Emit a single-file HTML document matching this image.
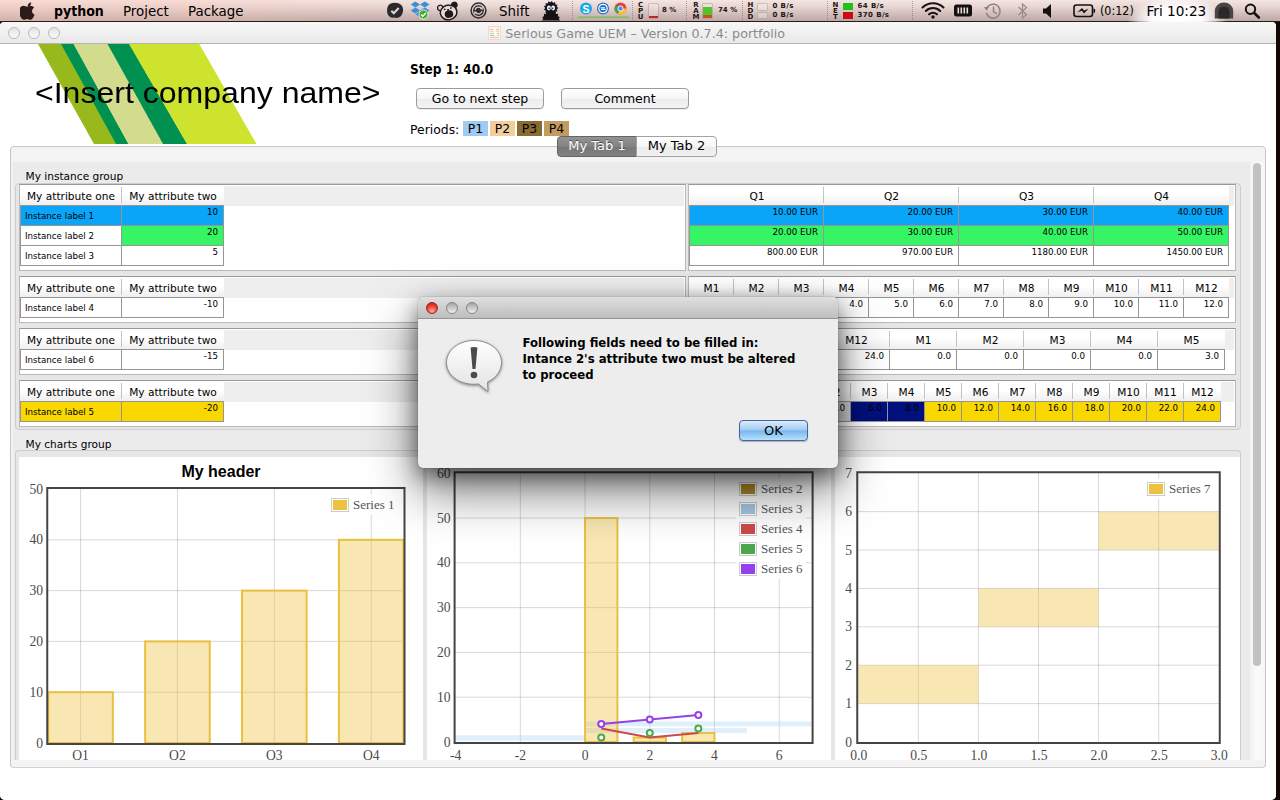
<!DOCTYPE html>
<html><head><meta charset="utf-8"><title>Serious Game UEM</title>
<style>
html,body{margin:0;padding:0}
body{width:1280px;height:800px;position:relative;overflow:hidden;background:#110705;font-family:'DejaVu Sans','Liberation Sans',sans-serif;font-size:12.5px;color:#000}
div,span{box-sizing:border-box}
.abs{position:absolute}
.t{position:absolute;white-space:nowrap;line-height:1}
#menubar{position:absolute;left:0;top:0;width:1280px;height:22px;background:linear-gradient(#f3e6e3 0%,#e6d3cf 35%,#cfbcb9 70%,#bba9a7 100%);border-bottom:1px solid #2e1712}
#win{position:absolute;left:0;top:22px;width:1276px;height:778px;background:#fff;border-radius:4px 4px 5px 5px;overflow:hidden}
#titlebar{position:absolute;left:0;top:0;width:100%;height:22px;background:linear-gradient(#f7f7f7,#e9e9e9);border-bottom:1px solid #b4b4b4;border-radius:4px 4px 0 0}
.tl{position:absolute;width:12px;height:12px;border-radius:6px;border:1px solid #b9b9b9;background:linear-gradient(#e4e4e4,#fafafa)}
.btn{position:absolute;height:21px;border:1px solid #9c9c9c;border-radius:4px;background:linear-gradient(#ffffff 0%,#f6f6f6 50%,#ececec 51%,#f3f3f3 100%);box-shadow:0 1px 0 rgba(0,0,0,0.08);text-align:center;font-size:12.5px;line-height:19px}
.per{position:absolute;top:121px;width:25px;height:15px;font-size:12.5px;line-height:15px;text-align:center}
.grp{position:absolute;border:1px solid #cdcdcd;border-radius:4px;background:#e6e6e6}
.frame{position:absolute;border:1px solid #b9b9b9;border-top-color:#989898;background:#fff}
.hband{position:absolute;left:1px;top:1px;right:1px;height:20px;background:#eeeeee}
.hc{position:absolute;top:0;height:20px;background:linear-gradient(#ffffff 0%,#ffffff 45%,#efefef 100%);font-size:10.6px;line-height:22px;text-align:center;overflow:hidden}
.hc i{position:absolute;right:0;top:2px;width:1px;height:16px;background:#c3c3c3}
.cell{position:absolute;height:21px;border:1px solid #959595;font-size:8.7px}
.cell span{position:absolute;white-space:nowrap}
.cl span{left:4px;top:5px}
.cr span{right:5px;top:1px}
.leg{position:absolute;background:rgba(255,255,255,0.85)}
.sw{position:absolute;width:18px;height:14px;border:1px solid #ccc;padding:1px;background:#fff}
.sw b{display:block;width:14px;height:10px}
.lt{position:absolute;font-family:'Liberation Serif',serif;font-size:13px;color:#545454;white-space:nowrap;line-height:14px}
.tick{position:absolute;font-family:'Liberation Serif',serif;font-size:13.6px;color:#4a4a4a;white-space:nowrap;line-height:15px}
</style></head><body>

<div id="menubar">
<div class="abs" style="left:0;top:0;width:420px;height:21px;background:linear-gradient(90deg,rgba(255,196,180,0.32) 0%,rgba(255,196,180,0.28) 45%,rgba(255,196,180,0) 100%)"></div>
<svg class="abs" style="left:20px;top:1.500px" width="16" height="18.500" viewBox="0 0 16 18"><defs><linearGradient id="ag" x1="0" y1="0" x2="0" y2="1"><stop offset="0" stop-color="#150b09"/><stop offset="0.45" stop-color="#3a201b"/><stop offset="1" stop-color="#8a5c53"/></linearGradient></defs><path d="M11.2 0.2c0.1 1-0.3 2-0.9 2.7-0.6 0.7-1.6 1.3-2.6 1.2-0.1-1 0.4-2 0.9-2.6 0.7-0.8 1.8-1.3 2.6-1.3zM14.6 12.6c-0.4 1-0.6 1.4-1.2 2.3-0.8 1.2-1.8 2.7-3.2 2.7-1.200 0-1.500-0.800-3.100-0.800-1.600 0-2 0.800-3.200 0.800-1.300 0-2.300-1.400-3.100-2.600-2.100-3.300-2.300-7.100-1-9.100 0.900-1.400 2.400-2.300 3.800-2.300 1.400 0 2.300 0.800 3.500 0.800 1.100 0 1.800-0.800 3.500-0.800 1.200 0 2.500 0.700 3.500 1.800-3 1.700-2.600 6 0.500 7.200z" fill="#2a1a18"/></svg>
<span class="t" style="left:54px;top:3px;font-family:'DejaVu Sans Condensed','DejaVu Sans','Liberation Sans',sans-serif;font-weight:bold;font-size:14px;line-height:16px">python</span>
<span class="t" style="left:123px;top:4px;font-size:13.4px;line-height:16px">Project</span>
<span class="t" style="left:188px;top:4px;font-size:13.4px;line-height:16px">Package</span>
<svg class="abs" style="left:386px;top:2px" width="18" height="18" viewBox="0 0 18 18"><path d="M4.200 1.800c3.500-1.600 8.500-1.300 11 1.200 2.600 2.700 2.300 7.300 0.300 10.300-1.700 2.500-4.800 3.300-7.300 2.300-3 0.600-6-1-6.800-4.300-0.700-3.300-0.200-7.900 2.800-9.500z" fill="#2b2929"/><path d="M5.300 8.700l2.500 2.600 4.900-5.300" stroke="#ddd5d4" stroke-width="2.100" fill="none"/></svg>
<svg class="abs" style="left:410px;top:1px" width="20" height="19" viewBox="0 0 20 19"><g fill="#3d8fd6"><path d="M5.200 0.500l4.800 3-4.500 3-4.800-3z"/><path d="M14.800 0.500l4.700 3-4.700 3-4.800-3z"/><path d="M0.700 9.500l4.800-3 4.500 3-4.800 3z"/><path d="M10 9.500l4.800-3 4.700 3-4.700 3z"/><path d="M5.500 13.300l4.500-3 4.500 3-4.500 2.900z"/></g><circle cx="13.500" cy="13.500" r="4.500" fill="#3fae2a" stroke="#fff" stroke-width="0.800"/><path d="M11.300 13.500l1.600 1.700 2.900-3.200" stroke="#fff" stroke-width="1.400" fill="none"/></svg>
<svg class="abs" style="left:437px;top:0.500px" width="23" height="20" viewBox="0 0 23 20"><g transform="rotate(-12 11.500 11)"><circle cx="4.300" cy="5.300" r="2.700" fill="#e4d2cf" stroke="#1e1a1a" stroke-width="1.300"/><circle cx="18.700" cy="5.300" r="2.700" fill="#1e1a1a" stroke="#1e1a1a" stroke-width="1.300"/><ellipse cx="11.500" cy="11.500" rx="8.300" ry="7.300" fill="#eadbd8" stroke="#1e1a1a" stroke-width="1.500"/><ellipse cx="11.500" cy="13.200" rx="4.300" ry="3.700" fill="#1e1a1a"/><circle cx="8.300" cy="7.600" r="0.900" fill="#1e1a1a"/><circle cx="14.700" cy="7.600" r="0.900" fill="#1e1a1a"/><ellipse cx="11.500" cy="8.800" rx="1.300" ry="0.800" fill="#1e1a1a"/></g></svg>
<svg class="abs" style="left:470px;top:2px" width="17" height="17" viewBox="0 0 17 17"><circle cx="8.500" cy="8.500" r="7.400" fill="none" stroke="#2f2d2d" stroke-width="1.500"/><circle cx="8.500" cy="8.500" r="5.400" fill="#2f2d2d"/><g fill="none" stroke="#e3d3d0" stroke-width="1.300"><path d="M5 7.800a3.700 3.700 0 0 1 6.300-1.500"/><path d="M12 9.200a3.700 3.700 0 0 1-6.300 1.500"/></g><path d="M12.700 4.600l0.100 3.100-3-0.700zM4.300 12.400l-0.100-3.100 3 0.700z" fill="#e3d3d0"/></svg>
<span class="t" style="left:499px;top:4px;font-size:13.4px;line-height:16px">Shift</span>
<svg class="abs" style="left:542px;top:1px" width="18" height="20" viewBox="0 0 18 20"><path d="M16.5 7.0 L14.6 8.3 L15.6 10.3 L13.3 10.6 L13.2 12.9 L11.0 12.1 L9.9 14.1 L8.3 12.4 L6.4 13.7 L5.7 11.5 L3.4 11.7 L3.9 9.5 L1.8 8.7 L3.3 7.0 L1.8 5.3 L3.9 4.5 L3.4 2.3 L5.7 2.5 L6.4 0.3 L8.3 1.6 L9.9 -0.1 L11.0 1.9 L13.2 1.1 L13.3 3.4 L15.6 3.7 L14.6 5.7 L16.5 7.0Z M-0.4 19.5 L1.3 18.0 L0.2 16.0 L2.2 15.2 L1.8 12.8 L4.0 12.9 L4.3 10.5 L6.3 11.4 L7.4 9.3 L9.0 10.9 L10.6 9.3 L11.7 11.4 L13.7 10.5 L14.0 12.9 L16.2 12.8 L15.8 15.2 L17.8 16.0 L16.7 18.0 L18.4 19.5Z" fill="#141212"/><ellipse cx="6.900" cy="7" rx="1.900" ry="2.400" fill="#fff"/><ellipse cx="11.100" cy="7" rx="1.900" ry="2.400" fill="#fff"/><circle cx="7.300" cy="7.300" r="1.100" fill="#3b86d6"/><circle cx="10.700" cy="7.300" r="1.100" fill="#3b86d6"/><circle cx="7.400" cy="7.300" r="0.450" fill="#111"/><circle cx="10.600" cy="7.300" r="0.450" fill="#111"/></svg>
<div class="abs" style="left:572px;top:1px;width:0;height:19px;border-left:1px dotted rgba(90,60,60,0.42)"></div>
<svg class="abs" style="left:578px;top:1px" width="52" height="19" viewBox="0 0 52 19"><circle cx="8" cy="7.500" r="6" fill="#19a8e6"/><text x="8" y="11.500" font-family="Liberation Sans,sans-serif" font-weight="bold" font-size="10.500" fill="#fff" text-anchor="middle">S</text><circle cx="25" cy="7.500" r="6" fill="#1d6fc4"/><circle cx="25" cy="7.500" r="4.200" fill="none" stroke="#fff" stroke-width="1.200"/><path d="M22.500 6.800h4.500M27.500 8.400h-4.500" stroke="#fff" stroke-width="1.100"/><circle cx="42.500" cy="7.500" r="6" fill="#e0433a"/><path d="M42.500 7.500L37.300 4.500A6 6 0 0 0 39.800 12.900z" fill="#3aa757"/><path d="M42.500 7.500L39.800 12.900A6 6 0 0 0 48.500 7.500z" fill="#f7c325"/><circle cx="42.500" cy="7.500" r="2.600" fill="#4a8af4" stroke="#fff" stroke-width="0.900"/><rect x="0" y="15.500" width="51" height="1.500" fill="#7bbf5a"/></svg>
<div class="abs" style="left:632px;top:1px;width:0;height:19px;border-left:1px dotted rgba(90,60,60,0.42)"></div>
<span class="t" style="left:637px;top:1.7px;font-size:7px;font-weight:bold;line-height:7px;width:7px;text-align:center;color:#1c1414">C</span>
<span class="t" style="left:637px;top:7.7px;font-size:7px;font-weight:bold;line-height:7px;width:7px;text-align:center;color:#1c1414">P</span>
<span class="t" style="left:637px;top:13.7px;font-size:7px;font-weight:bold;line-height:7px;width:7px;text-align:center;color:#1c1414">U</span>
<div class="abs" style="left:648px;top:3px;width:11px;height:16px;border:1px solid rgba(110,80,80,0.28);border-radius:2px;background:rgba(255,255,255,0.18)"></div><div class="abs" style="left:649px;top:16px;width:9px;height:1.500px;background:#c5261c"></div>
<span class="t" style="left:662px;top:7px;font-size:7px;font-weight:bold;line-height:7px;color:#1c1414">8 %</span>
<div class="abs" style="left:686px;top:1px;width:0;height:19px;border-left:1px dotted rgba(90,60,60,0.42)"></div>
<span class="t" style="left:692.5px;top:1.7px;font-size:7px;font-weight:bold;line-height:7px;width:7px;text-align:center;color:#1c1414">R</span>
<span class="t" style="left:692.5px;top:7.7px;font-size:7px;font-weight:bold;line-height:7px;width:7px;text-align:center;color:#1c1414">A</span>
<span class="t" style="left:692.5px;top:13.7px;font-size:7px;font-weight:bold;line-height:7px;width:7px;text-align:center;color:#1c1414">M</span>
<div class="abs" style="left:702px;top:3px;width:11px;height:16px;border:1px solid rgba(110,80,80,0.28);border-radius:2px;background:rgba(255,255,255,0.18)"></div><div class="abs" style="left:703px;top:7px;width:9px;height:8px;background:#55c42c"></div><div class="abs" style="left:703px;top:15px;width:9px;height:3px;background:#c4541c"></div>
<span class="t" style="left:718px;top:7px;font-size:7px;font-weight:bold;line-height:7px;color:#1c1414">74 %</span>
<div class="abs" style="left:742px;top:1px;width:0;height:19px;border-left:1px dotted rgba(90,60,60,0.42)"></div>
<span class="t" style="left:747px;top:1.7px;font-size:7px;font-weight:bold;line-height:7px;width:7px;text-align:center;color:#1c1414">H</span>
<span class="t" style="left:747px;top:7.7px;font-size:7px;font-weight:bold;line-height:7px;width:7px;text-align:center;color:#1c1414">D</span>
<span class="t" style="left:747px;top:13.7px;font-size:7px;font-weight:bold;line-height:7px;width:7px;text-align:center;color:#1c1414">D</span>
<div class="abs" style="left:757px;top:3px;width:11px;height:7.500px;border:1px solid rgba(120,90,90,0.3);border-radius:2px;background:rgba(255,255,255,0.3)"></div><div class="abs" style="left:757px;top:11.500px;width:11px;height:7.500px;border:1px solid rgba(120,90,90,0.3);border-radius:2px;background:rgba(255,255,255,0.3)"></div>
<span class="t" style="left:772.500px;top:3.200px;font-size:7px;font-weight:bold;line-height:7px;letter-spacing:0.4px;color:#1c1414">0 B/s</span>
<span class="t" style="left:772.500px;top:12.200px;font-size:7px;font-weight:bold;line-height:7px;letter-spacing:0.4px;color:#1c1414">0 B/s</span>
<div class="abs" style="left:827px;top:1px;width:0;height:19px;border-left:1px dotted rgba(90,60,60,0.42)"></div>
<span class="t" style="left:832px;top:1.7px;font-size:7px;font-weight:bold;line-height:7px;width:7px;text-align:center;color:#1c1414">N</span>
<span class="t" style="left:832px;top:7.7px;font-size:7px;font-weight:bold;line-height:7px;width:7px;text-align:center;color:#1c1414">E</span>
<span class="t" style="left:832px;top:13.7px;font-size:7px;font-weight:bold;line-height:7px;width:7px;text-align:center;color:#1c1414">T</span>
<div class="abs" style="left:843px;top:3px;width:10px;height:7px;background:#23c21b"></div><div class="abs" style="left:843px;top:12px;width:10px;height:7px;background:#c50f10"></div>
<span class="t" style="left:857.500px;top:3.200px;font-size:7px;font-weight:bold;line-height:7px;letter-spacing:0.4px;color:#1c1414">64 B/s</span>
<span class="t" style="left:857.500px;top:12.200px;font-size:7px;font-weight:bold;line-height:7px;letter-spacing:0.4px;color:#1c1414">370 B/s</span>
<div class="abs" style="left:912px;top:1px;width:0;height:19px;border-left:1px dotted rgba(90,60,60,0.42)"></div>
<svg class="abs" style="left:921px;top:2px" width="24" height="17" viewBox="0 0 24 17"><g fill="none" stroke="#1a1212" stroke-width="2.100" stroke-linecap="round"><path d="M1.500 5.500a15 15 0 0 1 21 0"/><path d="M4.800 9a10.200 10.200 0 0 1 14.400 0"/><path d="M8.100 12.300a5.500 5.500 0 0 1 7.800 0"/></g><circle cx="12" cy="15" r="1.700" fill="#1a1212"/></svg>
<svg class="abs" style="left:953px;top:3px" width="20" height="15" viewBox="0 0 20 15"><rect x="1" y="1.500" width="18" height="12" rx="2.500" fill="#151010"/><g fill="#eadcda"><rect x="4.500" y="4.500" width="1.600" height="6"/><rect x="7.500" y="4.500" width="1.600" height="6"/><rect x="10.500" y="4.500" width="1.600" height="6"/><rect x="13.500" y="4.500" width="1.600" height="6"/></g></svg>
<svg class="abs" style="left:983px;top:2px" width="20" height="18" viewBox="0 0 20 18"><g fill="none" stroke="#8d8282" stroke-width="1.500"><path d="M4.300 5.200a7 7 0 1 1-1 5.600"/><path d="M10.500 5v4.500l3 2" stroke-linecap="round"/></g><path d="M0.800 5.200l5.200-0.500-2.200 4z" fill="#8d8282"/></svg>
<svg class="abs" style="left:1017px;top:2px" width="11" height="18" viewBox="0 0 11 18"><path d="M1.500 5l8 7.500-4 3.500v-14l4 3.500-8 7.500" fill="none" stroke="#958a8a" stroke-width="1.200"/></svg>
<svg class="abs" style="left:1042px;top:3px" width="11" height="16" viewBox="0 0 11 16"><path d="M1 5.500h3l5-4.500v14l-5-4.500h-3z" fill="#151010"/></svg>
<svg class="abs" style="left:1073px;top:4px" width="23" height="14" viewBox="0 0 23 14"><rect x="1" y="1" width="18.500" height="11.500" rx="2.500" fill="none" stroke="#151010" stroke-width="1.600"/><path d="M20.500 4.500q1.800 0 1.800 2.200t-1.800 2.200z" fill="#151010"/><path d="M4.500 8.300l4.500-4.300 2 2.600 4.500-1.800-4.500 4.700-2-2.700z" fill="#151010"/></svg>
<span class="t" style="left:1100px;top:3px;font-size:12.400px;line-height:16px;font-family:'DejaVu Sans Condensed','DejaVu Sans','Liberation Sans',sans-serif">(0:12)</span>
<div class="abs" style="left:1127px;top:0;width:100px;height:22px;background:radial-gradient(ellipse 50px 27px at 50% 100%,rgba(255,255,255,1) 0%,rgba(255,255,255,0.97) 50%,rgba(255,255,255,0.6) 75%,rgba(255,255,255,0) 100%)"></div>
<span class="t" style="left:1146.500px;top:3px;font-size:13.600px;line-height:16px">Fri 10:23</span>
<svg class="abs" style="left:1214px;top:2px" width="20" height="17" viewBox="0 0 20 17"><path d="M0.800 16.500v-7.500a9.200 8.500 0 0 1 18.400 0v7.500z" fill="#4a4444"/><path d="M4.500 16.500v-6.500a5.500 5.500 0 0 1 11 0v6.500z" fill="#2d2828"/></svg>
<svg class="abs" style="left:1244px;top:3px" width="17" height="16" viewBox="0 0 17 16"><circle cx="6.500" cy="6.200" r="4.700" fill="none" stroke="#151010" stroke-width="2"/><path d="M10 9.800l4.800 4.700" stroke="#151010" stroke-width="2.600" stroke-linecap="round"/></svg>
</div>
<div id="win">
<div id="titlebar">
<div class="tl" style="left:8px;top:5px"></div>
<div class="tl" style="left:28px;top:5px"></div>
<div class="tl" style="left:48px;top:5px"></div>
<svg class="abs" style="left:488px;top:4px" width="13" height="14" viewBox="0 0 13 14"><rect x="0.500" y="0.500" width="12" height="13" fill="#fbf3ea" stroke="#f0dcc4"/><g stroke-width="1"><path d="M2 3.500h9" stroke="#f3b6a8"/><path d="M2 5.500h9" stroke="#f3d79a"/><path d="M2 7.500h9" stroke="#b9dca6"/><path d="M2 9.500h9" stroke="#a9c6ea"/><path d="M2 11.500h9" stroke="#f0c0a0"/></g><path d="M5 2l2.500 0 2 8-3 0z" fill="#fff" opacity="0.85"/></svg>
<span class="t" style="left:505.300px;top:4px;font-size:12.700px;line-height:16px;color:#8a8a8a">Serious Game UEM – Version 0.7.4: portfolio</span>
</div>
<div class="abs" style="left:0;top:-22px;width:1276px;height:800px">
<svg class="abs" style="left:0;top:44px" width="300" height="100" viewBox="0 0 300 100">
<polygon points="38,0 61.5,0 116.5,100 94,100" fill="#98b91c"/>
<polygon points="61,0 74,0 128.7,100 116,100" fill="#00904f"/>
<polygon points="73.5,0 108,0 163.2,100 128.4,100" fill="#d3dc8c"/>
<polygon points="107.5,0 129.5,0 187.2,100 163,100" fill="#00904f"/>
<polygon points="129,0 199.3,0 256.5,100 187,100" fill="#cde32e"/>
</svg>
<span class="t" style="left:35px;top:76px;font-family:'Liberation Sans',sans-serif;font-size:30px;line-height:34px;transform-origin:0 0;transform:scaleX(1.068)">&lt;Insert company name&gt;</span>
<span class="t" style="left:410px;top:61px;font-family:'DejaVu Sans Condensed','DejaVu Sans','Liberation Sans',sans-serif;font-weight:bold;font-size:13.500px;line-height:16px">Step 1: 40.0</span>
<div class="btn" style="left:416px;top:88px;width:128px">Go to next step</div>
<div class="btn" style="left:561px;top:88px;width:128px">Comment</div>
<span class="t" style="left:410px;top:122px;font-size:12.400px;line-height:15px">Periods:</span>
<div class="per" style="left:463px;background:#9fcaf1;color:#000">P1</div>
<div class="per" style="left:490px;background:#f1cf9d;color:#000">P2</div>
<div class="per" style="left:517px;background:#8a6a33;color:#000">P3</div>
<div class="per" style="left:544px;background:#c39b61;color:#000">P4</div>
<div class="abs" style="left:10px;top:146px;width:1256px;height:622px;border:1px solid #c6c6c6;border-radius:4px;background:#f3f3f3"></div>
<div class="abs" style="left:13px;top:162px;width:1237px;height:598px;background:#ebebeb"></div>
<div class="abs" style="left:1250px;top:162px;width:15px;height:598px;background:linear-gradient(90deg,#f1f1f1,#fbfbfb 45%,#f6f6f6)"></div>
<div class="abs" style="left:1253px;top:162.500px;width:7.500px;height:503.500px;border-radius:4px;background:#c1c1c1"></div>
<div class="abs" style="left:557px;top:136px;width:80px;height:21px;border:1px solid #646464;border-radius:4px 0 0 4px;background:linear-gradient(#939393,#828282 50%,#767676 51%,#818181);color:#fff;text-align:center;font-size:13px;line-height:18px;text-shadow:0 -1px 0 rgba(0,0,0,0.45)">My Tab 1</div>
<div class="abs" style="left:636px;top:136px;width:81px;height:21px;border:1px solid #a2a2a2;border-radius:0 4px 4px 0;background:linear-gradient(#ffffff,#f5f5f5 50%,#ebebeb 51%,#f1f1f1);text-align:center;font-size:13px;line-height:18px">My Tab 2</div>
<span class="t" style="left:25.500px;top:170px;font-size:10.600px;line-height:13px">My instance group</span>
<div class="grp" style="left:15px;top:183px;width:1226px;height:247px"></div>
<div class="frame" style="left:19px;top:184px;width:667px;height:87px"><div class="hband"></div></div>
<div class="hc" style="left:20px;top:185px;width:102px">My attribute one<i></i></div>
<div class="hc" style="left:122px;top:185px;width:102px">My attribute two</div>
<div class="cell cl" style="left:20px;top:205px;width:102px;background:#0aa5f8"><span>Instance label 1</span></div>
<div class="cell cr" style="left:121px;top:205px;width:103px;background:#0aa5f8"><span>10</span></div>
<div class="cell cl" style="left:20px;top:225px;width:102px;background:#fff"><span>Instance label 2</span></div>
<div class="cell cr" style="left:121px;top:225px;width:103px;background:#36f564"><span>20</span></div>
<div class="cell cl" style="left:20px;top:245px;width:102px;background:#fff"><span>Instance label 3</span></div>
<div class="cell cr" style="left:121px;top:245px;width:103px;background:#fff"><span>5</span></div>
<div class="frame" style="left:19px;top:276px;width:667px;height:47px"><div class="hband"></div></div>
<div class="hc" style="left:20px;top:277px;width:102px">My attribute one<i></i></div>
<div class="hc" style="left:122px;top:277px;width:102px">My attribute two</div>
<div class="cell cl" style="left:20px;top:297px;width:102px;background:#fff"><span>Instance label 4</span></div>
<div class="cell cr" style="left:121px;top:297px;width:103px;background:#fff"><span>-10</span></div>
<div class="frame" style="left:19px;top:328px;width:667px;height:47px"><div class="hband"></div></div>
<div class="hc" style="left:20px;top:329px;width:102px">My attribute one<i></i></div>
<div class="hc" style="left:122px;top:329px;width:102px">My attribute two</div>
<div class="cell cl" style="left:20px;top:349px;width:102px;background:#fff"><span>Instance label 6</span></div>
<div class="cell cr" style="left:121px;top:349px;width:103px;background:#fff"><span>-15</span></div>
<div class="frame" style="left:19px;top:380px;width:667px;height:47px"><div class="hband"></div></div>
<div class="hc" style="left:20px;top:381px;width:102px">My attribute one<i></i></div>
<div class="hc" style="left:122px;top:381px;width:102px">My attribute two</div>
<div class="cell cl" style="left:20px;top:401px;width:102px;background:#f8d800"><span>Instance label 5</span></div>
<div class="cell cr" style="left:121px;top:401px;width:103px;background:#f8d800"><span>-20</span></div>
<div class="frame" style="left:688px;top:184px;width:548px;height:87px"><div class="hband"></div></div>
<div class="hc" style="left:690px;top:185px;width:134px">Q1<i></i></div>
<div class="hc" style="left:824px;top:185px;width:135px">Q2<i></i></div>
<div class="hc" style="left:959px;top:185px;width:135px">Q3<i></i></div>
<div class="hc" style="left:1094px;top:185px;width:135px">Q4</div>
<div class="cell cr" style="left:689px;top:205px;width:135px;background:#0aa5f8"><span>10.00 EUR</span></div>
<div class="cell cr" style="left:823px;top:205px;width:136px;background:#0aa5f8"><span>20.00 EUR</span></div>
<div class="cell cr" style="left:958px;top:205px;width:136px;background:#0aa5f8"><span>30.00 EUR</span></div>
<div class="cell cr" style="left:1093px;top:205px;width:136px;background:#0aa5f8"><span>40.00 EUR</span></div>
<div class="cell cr" style="left:689px;top:225px;width:135px;background:#36f564"><span>20.00 EUR</span></div>
<div class="cell cr" style="left:823px;top:225px;width:136px;background:#36f564"><span>30.00 EUR</span></div>
<div class="cell cr" style="left:958px;top:225px;width:136px;background:#36f564"><span>40.00 EUR</span></div>
<div class="cell cr" style="left:1093px;top:225px;width:136px;background:#36f564"><span>50.00 EUR</span></div>
<div class="cell cr" style="left:689px;top:245px;width:135px;background:#fff"><span>800.00 EUR</span></div>
<div class="cell cr" style="left:823px;top:245px;width:136px;background:#fff"><span>970.00 EUR</span></div>
<div class="cell cr" style="left:958px;top:245px;width:136px;background:#fff"><span>1180.00 EUR</span></div>
<div class="cell cr" style="left:1093px;top:245px;width:136px;background:#fff"><span>1450.00 EUR</span></div>
<div class="frame" style="left:688px;top:276px;width:548px;height:47px"><div class="hband"></div></div>
<div class="hc" style="left:689px;top:277px;width:45px">M1<i></i></div>
<div class="cell cr" style="left:690px;top:297px;width:45px;background:#fff"><span>1.0</span></div>
<div class="hc" style="left:734px;top:277px;width:45px">M2<i></i></div>
<div class="cell cr" style="left:733px;top:297px;width:46px;background:#fff"><span>2.0</span></div>
<div class="hc" style="left:779px;top:277px;width:45px">M3<i></i></div>
<div class="cell cr" style="left:778px;top:297px;width:46px;background:#fff"><span>3.0</span></div>
<div class="hc" style="left:824px;top:277px;width:45px">M4<i></i></div>
<div class="cell cr" style="left:823px;top:297px;width:46px;background:#fff"><span>4.0</span></div>
<div class="hc" style="left:869px;top:277px;width:45px">M5<i></i></div>
<div class="cell cr" style="left:868px;top:297px;width:46px;background:#fff"><span>5.0</span></div>
<div class="hc" style="left:914px;top:277px;width:45px">M6<i></i></div>
<div class="cell cr" style="left:913px;top:297px;width:46px;background:#fff"><span>6.0</span></div>
<div class="hc" style="left:959px;top:277px;width:45px">M7<i></i></div>
<div class="cell cr" style="left:958px;top:297px;width:46px;background:#fff"><span>7.0</span></div>
<div class="hc" style="left:1004px;top:277px;width:45px">M8<i></i></div>
<div class="cell cr" style="left:1003px;top:297px;width:46px;background:#fff"><span>8.0</span></div>
<div class="hc" style="left:1049px;top:277px;width:45px">M9<i></i></div>
<div class="cell cr" style="left:1048px;top:297px;width:46px;background:#fff"><span>9.0</span></div>
<div class="hc" style="left:1094px;top:277px;width:45px">M10<i></i></div>
<div class="cell cr" style="left:1093px;top:297px;width:46px;background:#fff"><span>10.0</span></div>
<div class="hc" style="left:1139px;top:277px;width:45px">M11<i></i></div>
<div class="cell cr" style="left:1138px;top:297px;width:46px;background:#fff"><span>11.0</span></div>
<div class="hc" style="left:1184px;top:277px;width:45px">M12</div>
<div class="cell cr" style="left:1183px;top:297px;width:46px;background:#fff"><span>12.0</span></div>
<div class="frame" style="left:688px;top:328px;width:548px;height:47px"><div class="hband"></div></div>
<div class="abs" style="left:689px;top:329px;width:546px;height:44px;overflow:hidden">
<div class="hc" style="left:67px;top:0;width:67px">M11<i></i></div>
<div class="cell cr" style="left:66px;top:20px;width:68px;background:#fff"><span>22.0</span></div>
<div class="hc" style="left:134px;top:0;width:67px">M12<i></i></div>
<div class="cell cr" style="left:133px;top:20px;width:68px;background:#fff"><span>24.0</span></div>
<div class="hc" style="left:201px;top:0;width:67px">M1<i></i></div>
<div class="cell cr" style="left:200px;top:20px;width:68px;background:#fff"><span>0.0</span></div>
<div class="hc" style="left:268px;top:0;width:67px">M2<i></i></div>
<div class="cell cr" style="left:267px;top:20px;width:68px;background:#fff"><span>0.0</span></div>
<div class="hc" style="left:335px;top:0;width:67px">M3<i></i></div>
<div class="cell cr" style="left:334px;top:20px;width:68px;background:#fff"><span>0.0</span></div>
<div class="hc" style="left:402px;top:0;width:67px">M4<i></i></div>
<div class="cell cr" style="left:401px;top:20px;width:68px;background:#fff"><span>0.0</span></div>
<div class="hc" style="left:469px;top:0;width:67px">M5</div>
<div class="cell cr" style="left:468px;top:20px;width:68px;background:#fff"><span>3.0</span></div>
</div>
<div class="frame" style="left:688px;top:380px;width:548px;height:47px"><div class="hband"></div></div>
<div class="abs" style="left:689px;top:381px;width:546px;height:44px;overflow:hidden">
<div class="hc" style="left:88px;top:0;width:37px">M1<i></i></div>
<div class="cell cr" style="left:87px;top:20px;width:38px;background:#d8d8d8"><span>2.0</span></div>
<div class="hc" style="left:125px;top:0;width:37px">M2<i></i></div>
<div class="cell cr" style="left:124px;top:20px;width:38px;background:#d8d8d8"><span>4.0</span></div>
<div class="hc" style="left:162px;top:0;width:37px">M3<i></i></div>
<div class="cell cr" style="left:161px;top:20px;width:38px;background:#02107e"><span>6.0</span></div>
<div class="hc" style="left:199px;top:0;width:37px">M4<i></i></div>
<div class="cell cr" style="left:198px;top:20px;width:38px;background:#02107e"><span>8.0</span></div>
<div class="hc" style="left:236px;top:0;width:37px">M5<i></i></div>
<div class="cell cr" style="left:235px;top:20px;width:38px;background:#f8d800"><span>10.0</span></div>
<div class="hc" style="left:273px;top:0;width:37px">M6<i></i></div>
<div class="cell cr" style="left:272px;top:20px;width:38px;background:#f8d800"><span>12.0</span></div>
<div class="hc" style="left:310px;top:0;width:37px">M7<i></i></div>
<div class="cell cr" style="left:309px;top:20px;width:38px;background:#f8d800"><span>14.0</span></div>
<div class="hc" style="left:347px;top:0;width:37px">M8<i></i></div>
<div class="cell cr" style="left:346px;top:20px;width:38px;background:#f8d800"><span>16.0</span></div>
<div class="hc" style="left:384px;top:0;width:37px">M9<i></i></div>
<div class="cell cr" style="left:383px;top:20px;width:38px;background:#f8d800"><span>18.0</span></div>
<div class="hc" style="left:421px;top:0;width:37px">M10<i></i></div>
<div class="cell cr" style="left:420px;top:20px;width:38px;background:#f8d800"><span>20.0</span></div>
<div class="hc" style="left:458px;top:0;width:37px">M11<i></i></div>
<div class="cell cr" style="left:457px;top:20px;width:38px;background:#f8d800"><span>22.0</span></div>
<div class="hc" style="left:495px;top:0;width:37px">M12</div>
<div class="cell cr" style="left:494px;top:20px;width:38px;background:#f8d800"><span>24.0</span></div>
</div>
<span class="t" style="left:25.500px;top:438px;font-size:10.600px;line-height:13px">My charts group</span>
<div class="grp" style="left:15px;top:450px;width:1226px;height:330px;border-bottom:none"></div>
<div class="abs" style="left:19px;top:457px;width:404px;height:303px;background:#fff"></div>
<div class="abs" style="left:427px;top:457px;width:404px;height:303px;background:#fff"></div>
<div class="abs" style="left:835px;top:457px;width:405px;height:303px;background:#fff"></div>
<span class="t" style="left:121px;top:463px;width:200px;text-align:center;font-family:'Liberation Sans',sans-serif;font-weight:bold;font-size:16px;line-height:18px">My header</span>
<svg class="abs" style="left:45px;top:486px" width="363" height="262" viewBox="45 486 363 262"><rect x="47.25" y="488" width="357.25" height="256" fill="#fff"/><rect x="80.05" y="488" width="1" height="256" fill="rgba(84,84,84,0.22)"/><rect x="176.93" y="488" width="1" height="256" fill="rgba(84,84,84,0.22)"/><rect x="273.82" y="488" width="1" height="256" fill="rgba(84,84,84,0.22)"/><rect x="370.70" y="488" width="1" height="256" fill="rgba(84,84,84,0.22)"/><rect x="47.25" y="691.70" width="357.25" height="1" fill="rgba(84,84,84,0.22)"/><rect x="47.25" y="640.90" width="357.25" height="1" fill="rgba(84,84,84,0.22)"/><rect x="47.25" y="590.10" width="357.25" height="1" fill="rgba(84,84,84,0.22)"/><rect x="47.25" y="539.30" width="357.25" height="1" fill="rgba(84,84,84,0.22)"/><rect x="48.25" y="692.20" width="64.59" height="50.80" fill="rgba(237,194,64,0.4)" stroke="#ebbf3f" stroke-width="2"/><rect x="145.14" y="641.40" width="64.59" height="101.60" fill="rgba(237,194,64,0.4)" stroke="#ebbf3f" stroke-width="2"/><rect x="242.02" y="590.60" width="64.59" height="152.40" fill="rgba(237,194,64,0.4)" stroke="#ebbf3f" stroke-width="2"/><rect x="338.91" y="539.80" width="64.59" height="203.20" fill="rgba(237,194,64,0.4)" stroke="#ebbf3f" stroke-width="2"/><rect x="47.25" y="488" width="357.25" height="256" fill="none" stroke="#444" stroke-width="2"/></svg>
<span class="tick" style="left:3px;top:735.5px;width:40px;text-align:right">0</span>
<span class="tick" style="left:3px;top:684.7px;width:40px;text-align:right">10</span>
<span class="tick" style="left:3px;top:633.9px;width:40px;text-align:right">20</span>
<span class="tick" style="left:3px;top:583.1px;width:40px;text-align:right">30</span>
<span class="tick" style="left:3px;top:532.3px;width:40px;text-align:right">40</span>
<span class="tick" style="left:3px;top:481.5px;width:40px;text-align:right">50</span>
<span class="tick" style="left:50.5px;top:747.5px;width:60px;text-align:center">Q1</span>
<span class="tick" style="left:147.4px;top:747.5px;width:60px;text-align:center">Q2</span>
<span class="tick" style="left:244.3px;top:747.5px;width:60px;text-align:center">Q3</span>
<span class="tick" style="left:341.2px;top:747.5px;width:60px;text-align:center">Q4</span>
<div class="leg" style="left:328px;top:494px;width:70px;height:21px"></div>
<div class="sw" style="left:331px;top:498px"><b style="background:#edc240"></b></div>
<span class="lt" style="left:353px;top:498px">Series 1</span>
<svg class="abs" style="left:452px;top:470px" width="364" height="276" viewBox="452 470 364 276"><rect x="454.6" y="472.25" width="358.0" height="270.75" fill="#fff"/><rect x="519.83" y="472.25" width="1" height="270.75" fill="rgba(84,84,84,0.22)"/><rect x="584.55" y="472.25" width="1" height="270.75" fill="rgba(84,84,84,0.22)"/><rect x="649.28" y="472.25" width="1" height="270.75" fill="rgba(84,84,84,0.22)"/><rect x="714.01" y="472.25" width="1" height="270.75" fill="rgba(84,84,84,0.22)"/><rect x="778.74" y="472.25" width="1" height="270.75" fill="rgba(84,84,84,0.22)"/><rect x="454.6" y="696.71" width="358.0" height="1" fill="rgba(84,84,84,0.22)"/><rect x="454.6" y="651.92" width="358.0" height="1" fill="rgba(84,84,84,0.22)"/><rect x="454.6" y="607.12" width="358.0" height="1" fill="rgba(84,84,84,0.22)"/><rect x="454.6" y="562.33" width="358.0" height="1" fill="rgba(84,84,84,0.22)"/><rect x="454.6" y="517.54" width="358.0" height="1" fill="rgba(84,84,84,0.22)"/><rect x="455.60" y="735.28" width="129.45" height="5.38" fill="rgba(175,216,248,0.4)"/><rect x="585.05" y="721.40" width="226.55" height="4.93" fill="rgba(175,216,248,0.4)"/><rect x="585.05" y="728.11" width="161.82" height="4.93" fill="rgba(175,216,248,0.4)"/><rect x="585.05" y="518.04" width="32.36" height="223.96" fill="rgba(237,194,64,0.4)" stroke="#ebbf3f" stroke-width="2"/><rect x="633.60" y="737.52" width="32.36" height="4.48" fill="rgba(237,194,64,0.4)" stroke="#ebbf3f" stroke-width="2"/><rect x="682.15" y="733.04" width="32.36" height="8.96" fill="rgba(237,194,64,0.4)" stroke="#ebbf3f" stroke-width="2"/><polyline points="601.24,728.56 649.78,737.52 698.33,733.04" fill="none" stroke="#cb4b4b" stroke-width="2"/><circle cx="601.24" cy="737.52" r="3" fill="#fff" stroke="#4da74d" stroke-width="2"/><circle cx="649.78" cy="733.04" r="3" fill="#fff" stroke="#4da74d" stroke-width="2"/><circle cx="698.33" cy="728.56" r="3" fill="#fff" stroke="#4da74d" stroke-width="2"/><polyline points="601.24,724.08 649.78,719.60 698.33,715.12" fill="none" stroke="#9440ed" stroke-width="2"/><circle cx="601.24" cy="724.08" r="3" fill="#fff" stroke="#9440ed" stroke-width="2"/><circle cx="649.78" cy="719.60" r="3" fill="#fff" stroke="#9440ed" stroke-width="2"/><circle cx="698.33" cy="715.12" r="3" fill="#fff" stroke="#9440ed" stroke-width="2"/><rect x="454.6" y="472.25" width="358.0" height="270.75" fill="none" stroke="#444" stroke-width="2"/></svg>
<span class="tick" style="left:410.5px;top:734.5px;width:40px;text-align:right">0</span>
<span class="tick" style="left:410.5px;top:689.7px;width:40px;text-align:right">10</span>
<span class="tick" style="left:410.5px;top:644.9px;width:40px;text-align:right">20</span>
<span class="tick" style="left:410.5px;top:600.1px;width:40px;text-align:right">30</span>
<span class="tick" style="left:410.5px;top:555.3px;width:40px;text-align:right">40</span>
<span class="tick" style="left:410.5px;top:510.5px;width:40px;text-align:right">50</span>
<span class="tick" style="left:410.5px;top:465.8px;width:40px;text-align:right">60</span>
<span class="tick" style="left:425.6px;top:747.5px;width:60px;text-align:center">-4</span>
<span class="tick" style="left:490.3px;top:747.5px;width:60px;text-align:center">-2</span>
<span class="tick" style="left:555.1px;top:747.5px;width:60px;text-align:center">0</span>
<span class="tick" style="left:619.8px;top:747.5px;width:60px;text-align:center">2</span>
<span class="tick" style="left:684.5px;top:747.5px;width:60px;text-align:center">4</span>
<span class="tick" style="left:749.2px;top:747.5px;width:60px;text-align:center">6</span>
<div class="leg" style="left:736px;top:478px;width:70px;height:101px"></div>
<div class="sw" style="left:739px;top:482px"><b style="background:#b18a27"></b></div>
<span class="lt" style="left:761px;top:482px">Series 2</span>
<div class="sw" style="left:739px;top:502px"><b style="background:#a6c8e4"></b></div>
<span class="lt" style="left:761px;top:502px">Series 3</span>
<div class="sw" style="left:739px;top:522px"><b style="background:#cb4b4b"></b></div>
<span class="lt" style="left:761px;top:522px">Series 4</span>
<div class="sw" style="left:739px;top:542px"><b style="background:#4da74d"></b></div>
<span class="lt" style="left:761px;top:542px">Series 5</span>
<div class="sw" style="left:739px;top:562px"><b style="background:#9440ed"></b></div>
<span class="lt" style="left:761px;top:562px">Series 6</span>
<svg class="abs" style="left:855px;top:470px" width="368" height="276" viewBox="855 470 368 276"><rect x="857.25" y="472.25" width="362.5" height="270.75" fill="#fff"/><rect x="917.83" y="472.25" width="1" height="270.75" fill="rgba(84,84,84,0.22)"/><rect x="977.92" y="472.25" width="1" height="270.75" fill="rgba(84,84,84,0.22)"/><rect x="1038.00" y="472.25" width="1" height="270.75" fill="rgba(84,84,84,0.22)"/><rect x="1098.08" y="472.25" width="1" height="270.75" fill="rgba(84,84,84,0.22)"/><rect x="1158.17" y="472.25" width="1" height="270.75" fill="rgba(84,84,84,0.22)"/><rect x="857.25" y="703.11" width="362.5" height="1" fill="rgba(84,84,84,0.22)"/><rect x="857.25" y="664.71" width="362.5" height="1" fill="rgba(84,84,84,0.22)"/><rect x="857.25" y="626.32" width="362.5" height="1" fill="rgba(84,84,84,0.22)"/><rect x="857.25" y="587.93" width="362.5" height="1" fill="rgba(84,84,84,0.22)"/><rect x="857.25" y="549.54" width="362.5" height="1" fill="rgba(84,84,84,0.22)"/><rect x="857.25" y="511.14" width="362.5" height="1" fill="rgba(84,84,84,0.22)"/><rect x="858.25" y="665.21" width="120.17" height="38.39" fill="rgba(237,194,64,0.4)"/><rect x="978.42" y="588.43" width="120.17" height="38.39" fill="rgba(237,194,64,0.4)"/><rect x="1098.58" y="511.64" width="120.17" height="38.39" fill="rgba(237,194,64,0.4)"/><rect x="857.25" y="472.25" width="362.5" height="270.75" fill="none" stroke="#444" stroke-width="2"/></svg>
<span class="tick" style="left:812px;top:734.5px;width:40px;text-align:right">0</span>
<span class="tick" style="left:812px;top:696.1px;width:40px;text-align:right">1</span>
<span class="tick" style="left:812px;top:657.7px;width:40px;text-align:right">2</span>
<span class="tick" style="left:812px;top:619.3px;width:40px;text-align:right">3</span>
<span class="tick" style="left:812px;top:580.9px;width:40px;text-align:right">4</span>
<span class="tick" style="left:812px;top:542.5px;width:40px;text-align:right">5</span>
<span class="tick" style="left:812px;top:504.1px;width:40px;text-align:right">6</span>
<span class="tick" style="left:812px;top:465.8px;width:40px;text-align:right">7</span>
<span class="tick" style="left:828.8px;top:747.5px;width:60px;text-align:center">0.0</span>
<span class="tick" style="left:888.8px;top:747.5px;width:60px;text-align:center">0.5</span>
<span class="tick" style="left:948.9px;top:747.5px;width:60px;text-align:center">1.0</span>
<span class="tick" style="left:1009.0px;top:747.5px;width:60px;text-align:center">1.5</span>
<span class="tick" style="left:1069.1px;top:747.5px;width:60px;text-align:center">2.0</span>
<span class="tick" style="left:1129.2px;top:747.5px;width:60px;text-align:center">2.5</span>
<span class="tick" style="left:1189.2px;top:747.5px;width:60px;text-align:center">3.0</span>
<div class="leg" style="left:1144px;top:478px;width:70px;height:21px"></div>
<div class="sw" style="left:1147px;top:482px"><b style="background:#edc240"></b></div>
<span class="lt" style="left:1169px;top:482px">Series 7</span>
<div class="abs" style="left:11px;top:760px;width:1254px;height:7px;background:#f3f3f3"></div>
<div class="abs" style="left:10px;top:760px;width:1256px;height:8px;border:1px solid #c6c6c6;border-bottom-color:#d2d2d2;border-top:none;border-radius:0 0 4px 4px"></div>
<div class="abs" style="left:0;top:768px;width:1276px;height:32px;background:#fff"></div>
<div class="abs" style="left:418px;top:297px;width:420px;height:171px;border-radius:5px;background:#ededed;box-shadow:0 22px 50px rgba(0,0,0,0.56),0 8px 20px rgba(0,0,0,0.45),0 0 1px rgba(0,0,0,0.6)">
<div class="abs" style="left:0;top:0;width:420px;height:22px;border-radius:5px 5px 0 0;background:linear-gradient(#dfdfdf,#bebebe);border-bottom:1px solid #959595"></div>
<div class="abs" style="left:8px;top:5px;width:12px;height:12px;border-radius:6px;background:radial-gradient(circle at 50% 80%,#ffb3aa 0%,#f5564d 40%,#dc2f28 70%,#b81f19 100%);border:0.500px solid #a3211b"></div>
<div class="abs" style="left:28px;top:5px;width:12px;height:12px;border-radius:6px;background:linear-gradient(#a4a4a4,#f0f0f0);border:1px solid #858585"></div>
<div class="abs" style="left:48px;top:5px;width:12px;height:12px;border-radius:6px;background:linear-gradient(#a4a4a4,#f0f0f0);border:1px solid #858585"></div>
<svg class="abs" style="left:24px;top:38px;filter:drop-shadow(0 1px 1.5px rgba(0,0,0,0.45))" width="64" height="62" viewBox="0 0 64 62"><defs><linearGradient id="bg1" x1="0" y1="0" x2="0" y2="1"><stop offset="0" stop-color="#ffffff"/><stop offset="1" stop-color="#e2e2e2"/></linearGradient></defs><path d="M32 5.500c15 0 27.500 9.500 27.500 22 0 8.500-5.500 15.500-14 19.500l0.500 9.500-9.500-7.500c-1.500 0.200-3 0.300-4.500 0.300-15 0-27.500-9.300-27.500-21.800s12.500-22 27.500-22z" fill="url(#bg1)" stroke="#8c8c8c" stroke-width="1"/><path d="M28.600 12.500q3.400-0.900 6.800 0l-1.900 21.500h-3z" fill="#4a4a4a"/><circle cx="32" cy="40" r="3.300" fill="#4a4a4a"/></svg>
<span class="t" style="left:104.500px;top:38px;font-family:'DejaVu Sans Condensed','DejaVu Sans','Liberation Sans',sans-serif;font-weight:bold;font-size:13px;line-height:16px">Following fields need to be filled in:</span>
<span class="t" style="left:104.500px;top:54px;font-family:'DejaVu Sans Condensed','DejaVu Sans','Liberation Sans',sans-serif;font-weight:bold;font-size:13px;line-height:16px">Intance 2's attribute two must be altered</span>
<span class="t" style="left:104.500px;top:70px;font-family:'DejaVu Sans Condensed','DejaVu Sans','Liberation Sans',sans-serif;font-weight:bold;font-size:13px;line-height:16px">to proceed</span>
<div class="abs" style="left:321px;top:123px;width:69px;height:21px;border:1px solid #4d5fa0;border-radius:4px;background:linear-gradient(#dcecfb 0%,#9fcbf3 48%,#79b6ee 52%,#b7e2fb 100%);text-align:center;font-size:13px;line-height:19px;box-shadow:0 1px 1px rgba(0,0,0,0.25)">OK</div>
</div>
</div></div></body></html>
